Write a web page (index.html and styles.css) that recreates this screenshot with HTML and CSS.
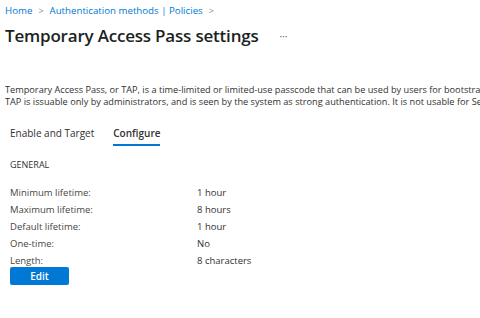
FILE: index.html
```html
<!DOCTYPE html>
<html>
<head>
<meta charset="utf-8">
<link rel="stylesheet" href="styles.css">
</head>
<body>
<div class="page">
  <nav class="crumbs">
    <a class="crumb">Home</a>
    <span class="sep">&gt;</span>
    <a class="crumb">Authentication methods | Policies</a>
    <span class="sep">&gt;</span>
  </nav>
  <div class="titlebar">
    <h1 class="title">Temporary Access Pass settings</h1>
    <span class="more">···</span>
  </div>
  <div class="desc">
    <p class="line">Temporary Access Pass, or TAP, is a time-limited or limited-use passcode that can be used by users for bootstrapping new accounts, account recovery, or when other auth methods are unavailable.</p>
    <p class="line">TAP is issuable only by administrators, and is seen by the system as strong authentication. It is not usable for Self Service Password Reset.</p>
  </div>
  <div class="tabs">
    <span class="tab">Enable and Target</span>
    <span class="tab active">Configure</span>
  </div>
  <div class="section">
    <div class="heading">GENERAL</div>
    <div class="grid">
      <span class="label">Minimum lifetime:</span><span class="value">1 hour</span>
      <span class="label">Maximum lifetime:</span><span class="value">8 hours</span>
      <span class="label">Default lifetime:</span><span class="value">1 hour</span>
      <span class="label">One-time:</span><span class="value">No</span>
      <span class="label">Length:</span><span class="value">8 characters</span>
    </div>
    <button class="btn">Edit</button>
  </div>
</div>
</body>
</html>
```

FILE: styles.css
```css
html, body {
  margin: 0;
  padding: 0;
  background: #ffffff;
  width: 480px;
  height: 318px;
  overflow: hidden;
}
.page {
  font-family: "Open Sans", "Noto Sans", sans-serif;
  color: #323130;
  padding-left: 5px;
}
.crumbs {
  display: flex;
  align-items: center;
  gap: 6px;
  height: 12px;
  margin-top: 5px;
  font-size: 9.7px;
  line-height: 12px;
}
.crumb {
  color: #0078d4;
}
.sep {
  color: #8a8886;
  font-size: 9px;
}
.titlebar {
  display: flex;
  align-items: center;
  margin-top: 12px;
  height: 14px;
}
.title {
  margin: 0;
  font-size: 17px;
  letter-spacing: -0.2px;
  font-weight: 600;
  line-height: 14px;
  color: #201f1e;
  white-space: nowrap;
}
.more {
  margin-left: 21px;
  font-size: 10px;
  color: #605e5c;
}
.desc {
  margin-top: 41px;
  font-size: 9.2px;
  line-height: 12px;
  white-space: nowrap;
  overflow: hidden;
}
.line {
  margin: 0;
}
.tabs {
  display: flex;
  gap: 19px;
  margin-top: 18px;
  padding-left: 5px;
  font-size: 10px;
  line-height: 14px;
}
.tab {
  padding-bottom: 4px;
  border-bottom: 2px solid transparent;
  color: #323130;
}
.tab.active {
  font-weight: 600;
  border-bottom-color: #0078d4;
}
.section {
  padding-left: 5px;
  margin-top: 13px;
}
.heading {
  font-size: 9px;
  line-height: 12px;
  color: #323130;
}
.grid {
  display: grid;
  grid-template-columns: 187px auto;
  row-gap: 5px;
  margin-top: 16px;
  font-size: 9.5px;
  line-height: 12px;
}
.label {
  color: #484644;
}
.value {
  color: #323130;
}
.btn {
  display: block;
  margin-top: 0;
  width: 59px;
  height: 18px;
  padding: 0;
  border: none;
  border-radius: 2px;
  background: #0078d4;
  color: #ffffff;
  font-family: "Open Sans", sans-serif;
  font-size: 10px;
  font-weight: 600;
}
```
